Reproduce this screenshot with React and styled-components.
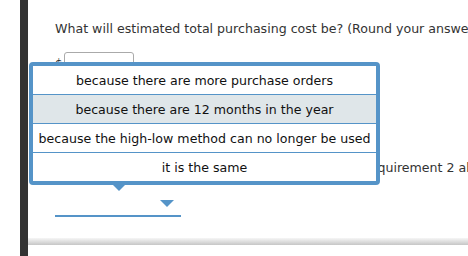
import React from "react";
import styled, { createGlobalStyle } from "styled-components";

const Global = createGlobalStyle`
  html, body { margin: 0; padding: 0; background: #fff; }
  body { font-family: "DejaVu Sans", Verdana, sans-serif; font-size: 12.6px; color: #333; }
  #root { height: 256px; overflow: hidden; }
`;

const Page = styled.div`
  display: flex;
  height: 256px;
`;

const Gutter = styled.div`
  width: 20px;
  flex: none;
  background: #fff;
`;

const Bar = styled.div`
  width: 8px;
  flex: none;
  background: #333;
`;

const Main = styled.div`
  position: relative;
  flex: 1;
  display: flex;
  flex-direction: column;
  min-width: 0;
`;

const Content = styled.div`
  flex: 1;
  padding: 20px 0 0 27px;
  white-space: nowrap;
  overflow: hidden;
`;

const Text = styled.p`
  margin: 0;
  line-height: 17px;
  color: #333;
`;

const AnswerRow = styled.div`
  display: flex;
  align-items: flex-start;
  margin-top: 15px;
  gap: 1px;
`;

const Dollar = styled.span`
  font-size: 12px;
  line-height: 17px;
  margin-top: 4px;
`;

const Input = styled.div`
  width: 70px;
  height: 22px;
  border: 1px solid #aaa;
  border-radius: 3px;
  box-sizing: border-box;
`;

const SecondLine = styled(Text)`
  margin-top: 85px;
`;

const Select = styled.div`
  position: relative;
  width: 126px;
  height: 26px;
  margin-top: 13px;
  border-bottom: 2px solid #5594c8;
  box-sizing: content-box;
`;

const Caret = styled.span`
  position: absolute;
  right: 7px;
  top: 11px;
  width: 0;
  height: 0;
  border-left: 7px solid transparent;
  border-right: 7px solid transparent;
  border-top: 7px solid #5594c8;
`;

const Footer = styled.div`
  height: 7px;
  margin-bottom: 11px;
  background: linear-gradient(to bottom, #f6f6f6, #c6c6c6);
`;

const Menu = styled.ul`
  position: absolute;
  left: 1px;
  top: 62px;
  width: 351px;
  margin: 0;
  padding: 0;
  list-style: none;
  box-sizing: border-box;
  border: 4px solid #5594c8;
  border-radius: 4px;
  background: #fff;
`;

const Item = styled.li`
  height: 28px;
  line-height: 29px;
  text-align: center;
  color: #111;
  white-space: nowrap;
  background: ${(p) => (p.$active ? "#dfe6e9" : "#fff")};
  & + & {
    border-top: 1px solid #5594c8;
  }
`;

const Pointer = styled.span`
  position: absolute;
  left: 80px;
  top: 100%;
  margin-top: 4px;
  width: 0;
  height: 0;
  border-left: 6px solid transparent;
  border-right: 6px solid transparent;
  border-top: 6px solid #5594c8;
`;

const options = [
  "because there are more purchase orders",
  "because there are 12 months in the year",
  "because the high-low method can no longer be used",
  "it is the same",
];

export default function App() {
  return (
    <>
      <Global />
      <Page>
        <Gutter />
        <Bar />
        <Main>
          <Content>
            <Text>What will estimated total purchasing cost be? (Round your answer to the nearest dollar.)</Text>
            <AnswerRow>
              <Dollar>$</Dollar>
              <Input />
            </AnswerRow>
            <SecondLine>Why is the estimate different than the answer in requirement 2 above?</SecondLine>
            <Select>
              <Caret />
            </Select>
          </Content>
          <Footer />
          <Menu>
            {options.map((o, i) => (
              <Item key={o} $active={i === 1}>
                {o}
              </Item>
            ))}
            <Pointer />
          </Menu>
        </Main>
      </Page>
    </>
  );
}
